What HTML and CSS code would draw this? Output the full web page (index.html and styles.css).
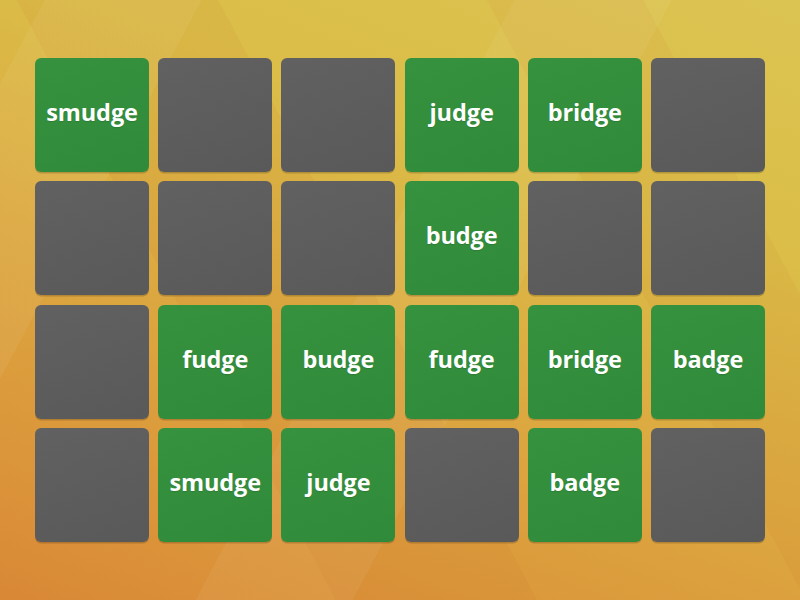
FILE: index.html
```html
<!DOCTYPE html>
<html>
<head>
<meta charset="utf-8">
<link rel="stylesheet" href="styles.css">
</head>
<body>
<main class="board">
  <div class="grid">
    <div class="tile open">smudge</div>
    <div class="tile"></div>
    <div class="tile"></div>
    <div class="tile open">judge</div>
    <div class="tile open">bridge</div>
    <div class="tile"></div>

    <div class="tile"></div>
    <div class="tile"></div>
    <div class="tile"></div>
    <div class="tile open">budge</div>
    <div class="tile"></div>
    <div class="tile"></div>

    <div class="tile"></div>
    <div class="tile open">fudge</div>
    <div class="tile open">budge</div>
    <div class="tile open">fudge</div>
    <div class="tile open">bridge</div>
    <div class="tile open">badge</div>

    <div class="tile"></div>
    <div class="tile open">smudge</div>
    <div class="tile open">judge</div>
    <div class="tile"></div>
    <div class="tile open">badge</div>
    <div class="tile"></div>
  </div>
</main>
</body>
</html>
```

FILE: styles.css
```css
html, body {
  margin: 0;
  padding: 0;
}

body {
  width: 800px;
  height: 600px;
  overflow: hidden;
  font-family: "Open Sans", "DejaVu Sans", sans-serif;
  background:
    linear-gradient(118deg, transparent 0 4%, rgba(255,255,255,0.05) 4% 18%, transparent 18% 46%, rgba(255,255,255,0.05) 46% 60%, transparent 60% 100%),
    linear-gradient(62deg, transparent 0 30%, rgba(180,70,20,0.06) 30% 48%, transparent 48% 72%, rgba(180,70,20,0.05) 72% 86%, transparent 86%),
    linear-gradient(200deg, #dcc452 0%, #dbbd48 30%, #dca840 58%, #db943a 85%, #d98835 100%);
}

.board {
  display: flex;
  justify-content: center;
  padding-top: 58px;
}

.grid {
  display: grid;
  grid-template-columns: repeat(6, 114px);
  grid-auto-rows: 114px;
  column-gap: 9.2px;
  row-gap: 9.4px;
}

.tile {
  box-sizing: border-box;
  padding-bottom: 6px;
  border-radius: 6px;
  background: linear-gradient(160deg, #616161 0%, #595959 100%);
  box-shadow: 0 1.5px 0 rgba(0,0,0,0.18);
  display: flex;
  align-items: center;
  justify-content: center;
  color: #ffffff;
  font-weight: 700;
  font-size: 23.5px;
  letter-spacing: -0.1px;
}

.tile.open {
  background: linear-gradient(160deg, #37923f 0%, #2f8a3a 100%);
  text-shadow: 0 1px 1px rgba(0,0,0,0.12);
}
```
